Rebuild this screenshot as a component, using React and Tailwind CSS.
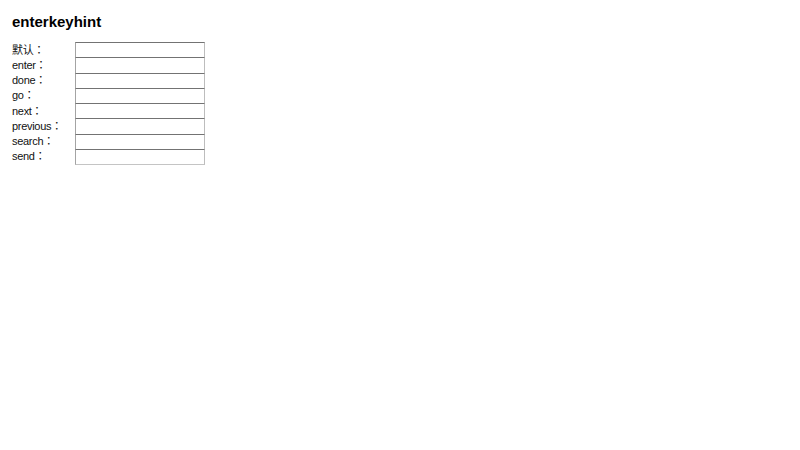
import React from 'react';

const hints = [
  { label: '默认', hint: undefined },
  { label: 'enter', hint: 'enter' },
  { label: 'done', hint: 'done' },
  { label: 'go', hint: 'go' },
  { label: 'next', hint: 'next' },
  { label: 'previous', hint: 'previous' },
  { label: 'search', hint: 'search' },
  { label: 'send', hint: 'send' },
];

const App = () => {
  return (
    <div
      className="min-h-screen bg-white text-black px-[12px] pt-[12px]"
      style={{ fontFamily: '"Liberation Sans", "Noto Sans CJK JP", sans-serif' }}
    >
      <h3 className="text-[15px] font-bold leading-[20px] mb-[10px]">enterkeyhint</h3>

      <div className="flex flex-col">
        {hints.map((item, i) => (
          <label key={item.label} className={`flex items-center ${i > 0 ? '-mt-px' : ''}`}>
            <span className="w-[63px] text-[11px] leading-[14px] tracking-[-0.3px] whitespace-nowrap text-[#111] -mt-px">
              {item.label}：
            </span>
            <input
              type="text"
              enterKeyHint={item.hint}
              className="w-[130px] h-[16.25px] border border-[#a4a4a4] border-t-[#737373] border-b-[#c4c4c4] border-r-[#bdbdbd] bg-white outline-none"
            />
          </label>
        ))}
      </div>
    </div>
  );
};

export default App;
